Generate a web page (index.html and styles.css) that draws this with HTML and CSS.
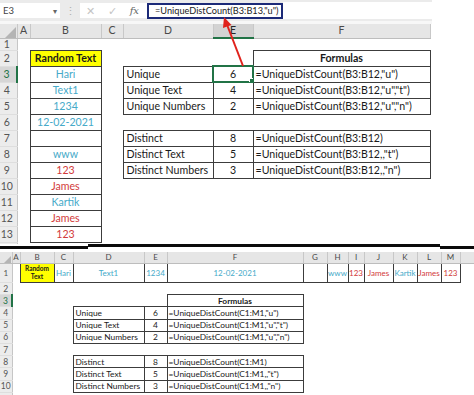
FILE: index.html
```html
<!DOCTYPE html>
<html>
<head>
<meta charset="utf-8">
<link rel="stylesheet" href="styles.css">
</head>
<body>
<div class="page">
  <section class="shot1">
    <div class="fbar">
      <div class="namebox"><span>E3</span><span class="dd">▾</span></div>
      <div class="dots">⋮</div>
      <div class="fxicons"><span class="ic">✕</span><span class="ic">✓</span><span class="fx">fx</span></div>
      <div class="formula">=UniqueDistCount(B3:B13,"u")</div>
      <div class="fbar-rest"></div>
    </div>
    <div class="gap1"></div>
    <table class="sheet s1">
      <colgroup><col class="c17"><col class="c13"><col class="c71"><col class="c22"><col class="c90"><col class="c40"><col class="c177"></colgroup>
      <tr class="hdr"><th class="corner"><svg width="11" height="11" viewBox="0 0 11 11"><polygon points="11,0 11,11 0,11" fill="#b4b4b4"/></svg></th><th>A</th><th>B</th><th>C</th><th>D</th><th class="hsel">E</th><th>F</th></tr>
      <tr class="r1"><td class="rh">1</td><td></td><td></td><td></td><td></td><td></td><td></td></tr>
      <tr><td class="rh">2</td><td></td><td class="b yel">Random Text</td><td></td><td></td><td></td><td class="b bold ctr">Formulas</td></tr>
      <tr><td class="rh rsel">3</td><td></td><td class="b ctr blue">Hari</td><td></td><td class="b lbl">Unique</td><td class="b ctr sel">6</td><td class="b fml">=UniqueDistCount(B3:B12,"u")</td></tr>
      <tr><td class="rh">4</td><td></td><td class="b ctr blue">Text1</td><td></td><td class="b lbl">Unique Text</td><td class="b ctr">4</td><td class="b fml">=UniqueDistCount(B3:B12,"u","t")</td></tr>
      <tr><td class="rh">5</td><td></td><td class="b ctr blue">1234</td><td></td><td class="b lbl">Unique Numbers</td><td class="b ctr">2</td><td class="b fml">=UniqueDistCount(B3:B12,"u","n")</td></tr>
      <tr><td class="rh">6</td><td></td><td class="b ctr blue">12-02-2021</td><td></td><td></td><td></td><td></td></tr>
      <tr><td class="rh">7</td><td></td><td class="b"></td><td></td><td class="b lbl">Distinct</td><td class="b ctr">8</td><td class="b fml">=UniqueDistCount(B3:B12)</td></tr>
      <tr><td class="rh">8</td><td></td><td class="b ctr blue">www</td><td></td><td class="b lbl">Distinct Text</td><td class="b ctr">5</td><td class="b fml">=UniqueDistCount(B3:B12,,"t")</td></tr>
      <tr><td class="rh">9</td><td></td><td class="b ctr red">123</td><td></td><td class="b lbl">Distinct Numbers</td><td class="b ctr">3</td><td class="b fml">=UniqueDistCount(B3:B12,,"n")</td></tr>
      <tr><td class="rh">10</td><td></td><td class="b ctr red">James</td><td></td><td></td><td></td><td></td></tr>
      <tr><td class="rh">11</td><td></td><td class="b ctr blue">Kartik</td><td></td><td></td><td></td><td></td></tr>
      <tr><td class="rh">12</td><td></td><td class="b ctr red">James</td><td></td><td></td><td></td><td></td></tr>
      <tr><td class="rh">13</td><td></td><td class="b ctr red">123</td><td></td><td></td><td></td><td></td></tr>
      <tr class="r14"><td class="rh"></td><td></td><td></td><td></td><td></td><td></td><td></td></tr>
    </table>
    <svg class="arrow" width="474" height="80" viewBox="0 0 474 80">
      <line x1="243" y1="66" x2="227.5" y2="26" stroke="#e0221c" stroke-width="2"/>
      <polygon points="224,17 231.5,25 223,28" fill="#e0221c"/>
    </svg>
  </section>
  <div class="cut"><i class="seg s-a"></i><i class="seg s-b"></i><i class="seg s-c"></i></div>
  <section class="shot2">
    <table class="sheet s2">
      <colgroup><col class="d12"><col class="d8"><col class="d34"><col class="d19"><col class="d71"><col class="d23"><col class="d136"><col class="d24"><col class="d21"><col class="d16"><col class="d29"><col class="d24"><col class="d24"><col class="d19"><col class="d14"></colgroup>
      <tr class="hdr"><th class="corner"><svg width="7" height="7" viewBox="0 0 7 7"><polygon points="7,0 7,7 0,7" fill="#b4b4b4"/></svg></th><th>A</th><th>B</th><th>C</th><th>D</th><th>E</th><th>F</th><th>G</th><th>H</th><th>I</th><th>J</th><th>K</th><th>L</th><th>M</th><th></th></tr>
      <tr class="row1"><td class="rh">1</td><td></td><td class="b yel rt">Random<br>Text</td><td class="b ctr blue">Hari</td><td class="b ctr blue">Text1</td><td class="b ctr blue">1234</td><td class="b ctr blue">12-02-2021</td><td class="b"></td><td class="b ctr blue">www</td><td class="b ctr red">123</td><td class="b ctr red">James</td><td class="b ctr blue">Kartik</td><td class="b ctr red">James</td><td class="b ctr red">123</td><td></td></tr>
      <tr><td class="rh">2</td><td></td><td></td><td></td><td></td><td></td><td></td><td></td><td></td><td></td><td></td><td></td><td></td><td></td><td></td></tr>
      <tr><td class="rh rsel">3</td><td></td><td></td><td></td><td></td><td></td><td class="b bold ctr">Formulas</td><td></td><td></td><td></td><td></td><td></td><td></td><td></td><td></td></tr>
      <tr><td class="rh">4</td><td></td><td></td><td></td><td class="b lbl">Unique</td><td class="b ctr">6</td><td class="b fml">=UniqueDistCount(C1:M1,"u")</td><td></td><td></td><td></td><td></td><td></td><td></td><td></td><td></td></tr>
      <tr><td class="rh">5</td><td></td><td></td><td></td><td class="b lbl">Unique Text</td><td class="b ctr">4</td><td class="b fml">=UniqueDistCount(C1:M1,"u","t")</td><td></td><td></td><td></td><td></td><td></td><td></td><td></td><td></td></tr>
      <tr><td class="rh">6</td><td></td><td></td><td></td><td class="b lbl">Unique Numbers</td><td class="b ctr">2</td><td class="b fml">=UniqueDistCount(C1:M1,"u","n")</td><td></td><td></td><td></td><td></td><td></td><td></td><td></td><td></td></tr>
      <tr><td class="rh">7</td><td></td><td></td><td></td><td></td><td></td><td></td><td></td><td></td><td></td><td></td><td></td><td></td><td></td><td></td></tr>
      <tr><td class="rh">8</td><td></td><td></td><td></td><td class="b lbl">Distinct</td><td class="b ctr">8</td><td class="b fml">=UniqueDistCount(C1:M1)</td><td></td><td></td><td></td><td></td><td></td><td></td><td></td><td></td></tr>
      <tr><td class="rh">9</td><td></td><td></td><td></td><td class="b lbl">Distinct Text</td><td class="b ctr">5</td><td class="b fml">=UniqueDistCount(C1:M1,,"t")</td><td></td><td></td><td></td><td></td><td></td><td></td><td></td><td></td></tr>
      <tr><td class="rh">10</td><td></td><td></td><td></td><td class="b lbl">Distinct Numbers</td><td class="b ctr">3</td><td class="b fml">=UniqueDistCount(C1:M1,,"n")</td><td></td><td></td><td></td><td></td><td></td><td></td><td></td><td></td></tr>
      <tr class="r11"><td class="rh"></td><td></td><td></td><td></td><td></td><td></td><td></td><td></td><td></td><td></td><td></td><td></td><td></td><td></td><td></td></tr>
    </table>
  </section>
</div>
</body>
</html>
```
FILE: styles.css
```css
* { box-sizing: border-box; }
html, body { margin: 0; padding: 0; background: #fff; }
body {
  width: 474px;
  height: 395px;
  overflow: hidden;
  font-family: Lato, "Open Sans", "Liberation Sans", sans-serif;
  color: #1a1a1a;
}
.page { width: 474px; }

/* ---------- top screenshot ---------- */
.shot1 { position: relative; width: 474px; height: 244px; overflow: hidden; }
.fbar {
  display: flex;
  align-items: center;
  width: 432px;
  height: 21px;
  background: #ebebeb;
}
.namebox {
  width: 60px;
  height: 15px;
  background: #fff;
  display: flex;
  align-items: center;
  justify-content: space-between;
  padding: 0 3px 0 3px;
  font-size: 9.5px;
  color: #444;
}
.dd { font-size: 8px; color: #666; }
.dots { width: 20px; text-align: center; color: #b0b0b0; font-size: 11px; }
.fxicons {
  width: 67px;
  height: 15px;
  background: #fff;
  display: flex;
  align-items: center;
  justify-content: space-between;
  padding: 0 8px 0 6px;
  font-size: 11px;
  color: #c4c4c4;
}
.fx { font-family: "DejaVu Serif", serif; font-style: italic; color: #666; font-size: 10px; }
.formula {
  width: 136px;
  height: 16px;
  border: 2px solid #1c2a78;
  background: #fff;
  font-size: 9.2px;
  line-height: 12px;
  padding-left: 6px;
  white-space: nowrap;
  color: #222;
}
.fbar-rest { flex: 1; height: 17px; background: #fff; }
.gap1 { height: 3px; width: 432px; background: #f7f7f7; }

.sheet { border-collapse: collapse; table-layout: fixed; }
.sheet td, .sheet th { padding: 0; white-space: nowrap; overflow: hidden; }
.s1 { width: 430px; font-size: 10.6px; }
.s1 .c17 { width: 17px; } .s1 .c13 { width: 13px; } .s1 .c71 { width: 71px; }
.s1 .c22 { width: 22px; } .s1 .c90 { width: 90px; } .s1 .c40 { width: 40px; }
.s1 .c177 { width: 177px; }

.sheet .hdr th {
  background: #e6e6e6;
  color: #4a4a4a;
  font-weight: normal;
  border-right: 1px solid #c8c8c8;
  border-bottom: 1px solid #bdbdbd;
  vertical-align: middle;
}
.s1 .hdr { height: 14px; }
.s1 .hdr th { font-size: 10.5px; line-height: 13px; }
.sheet .hdr th.corner { text-align: right; vertical-align: bottom; line-height: 0; padding-right: 1px; }
.s1 .hdr th.hsel { background: #d3d3d3; border-bottom: 2px solid #217346; color: #262626; }

.sheet td.rh {
  background: #ececec;
  color: #555;
  text-align: center;
  border-right: 1px solid #c6c6c6;
  border-bottom: 1px solid #dedede;
}
.s1 td.rh { font-size: 10.5px; padding-right: 3px; }
.sheet td.rsel { background: #d6d6d6; border-right: 2px solid #217346; color: #217346; }

.s1 tr { height: 16px; }
.s1 tr.r1 { height: 11px; }
.s1 tr.r1 td.rh { line-height: 11px; vertical-align: bottom; }
.s1 tr.r14 { height: 3px; }

.sheet td.b { border: 1px solid #3c3c3c; }
.yel { background: #ffff00; font-weight: bold; text-align: center; }
.bold { font-weight: bold; }
.ctr { text-align: center; }
.blue { color: #46aac9; }
.red { color: #d23a3a; }
.lbl { padding-left: 3px !important; }
.fml { padding-left: 2px !important; }
.sel { position: relative; outline: 2px solid #217346; outline-offset: -1px; }
.sel::after {
  content: "";
  position: absolute;
  right: -3px;
  bottom: -3px;
  width: 5px;
  height: 5px;
  background: #217346;
  border: 1px solid #fff;
}

.arrow { position: absolute; left: 0; top: 0; pointer-events: none; }

/* ---------- torn edge ---------- */
.cut { display: flex; height: 5px; }
.seg { display: block; height: 3px; background: #0a0a0a; }
.s-a { width: 88px; margin-top: 2px; }
.s-b { width: 352px; margin-top: 0; }
.s-c { width: 34px; margin-top: 2px; }

/* ---------- bottom screenshot ---------- */
.shot2 { padding-top: 3px; height: 146px; overflow: hidden; }
.s2 { width: 474px; font-size: 8.4px; }
.s2 .d12 { width: 12px; } .s2 .d8 { width: 8px; } .s2 .d34 { width: 34px; }
.s2 .d19 { width: 19px; } .s2 .d71 { width: 71px; } .s2 .d23 { width: 23px; }
.s2 .d136 { width: 136px; } .s2 .d24 { width: 24px; } .s2 .d21 { width: 21px; }
.s2 .d16 { width: 16px; } .s2 .d29 { width: 29px; } .s2 .d14 { width: 14px; }
.s2 .hdr { height: 11px; }
.s2 .hdr th { font-size: 8px; line-height: 10px; }
.s2 td.rh { font-size: 8.5px; }
.s2 tr { height: 12.2px; }
.s2 tr.row1 { height: 19.5px; }
.s2 tr.r11 { height: 3px; }
.s2 tr.row1 td { font-size: 8px; }
.s2 td.rt { font-size: 6.5px !important; line-height: 8px; }
.s2 .fml { padding-left: 1px !important; }
.s2 .lbl { padding-left: 2px !important; }
```
